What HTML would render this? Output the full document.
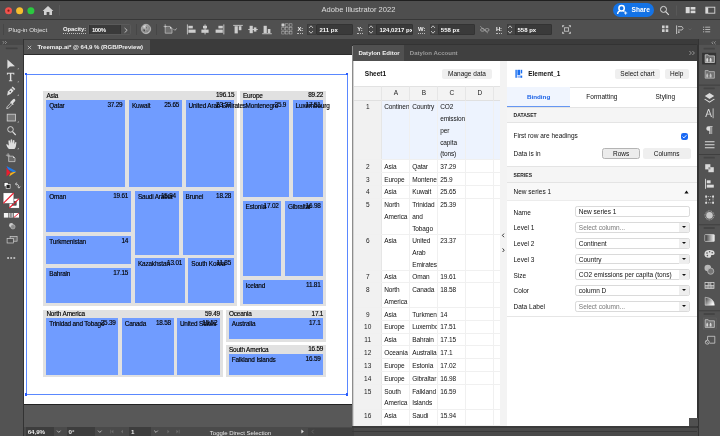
<!DOCTYPE html><html lang="en"><head><meta charset="utf-8"><title>Adobe Illustrator 2022</title><style>
*{box-sizing:border-box;margin:0;padding:0}
html,body{width:720px;height:436px;overflow:hidden;background:#505050}
body{position:relative;will-change:transform;font-family:"Liberation Sans",sans-serif;font-size:6.5px;color:#111;line-height:1}
.abs,.abs>*{position:absolute}
div,span,svg{position:absolute;white-space:nowrap}
/* ---------- chrome ---------- */
#titlebar{left:0;top:0;width:720px;height:19.6px;background:#4e4e4e}
#topline{left:0;top:0;width:720px;height:1.3px;background:#1f1f1f}
#ctrl{left:0;top:19.4px;width:720px;height:19.6px;background:#505050;border-top:0.8px solid #383838}
#tabstrip{left:23px;top:38.8px;width:697px;height:16.2px;background:#3b3b3b;border-bottom:1px solid #2c2c2c}
#doctab{left:24px;top:39.8px;width:125.6px;height:14.6px;background:#535353}
#toolbar{left:0;top:39px;width:24px;height:397px;background:#535353;border-right:1.3px solid #333}
#tbhead{left:0;top:38.8px;width:22.7px;height:6.6px;background:#484848}
#canvas{left:24px;top:54.8px;width:330px;height:350.3px;background:#fff;border-bottom:0.6px solid #222}
#below{left:24px;top:405px;width:330px;height:22px;background:#585858}
#status{left:24px;top:426.6px;width:674px;height:10px;background:#4a4a4a}
.t{color:#e2e2e2;font-size:6.2px}
.fld{background:#3a3a3a;border:0.5px solid #333;border-radius:1px;height:10.5px;top:24.3px;color:#fafafa;font-size:6px;font-weight:bold;line-height:10.2px;padding-left:2px;overflow:hidden}
.vsep{width:0.8px;background:#464646;top:24px;height:11px}
.ul{border-bottom:0.5px dotted #bbb;color:#f2f2f2;font-weight:bold;font-size:5.9px;letter-spacing:-0.05px;margin-top:0.6px}
/* ---------- treemap ---------- */
.g{background:#e1e1e1}
.c{background:#709cff}
.tm{font-size:6.4px;color:#000;letter-spacing:-0.15px;-webkit-text-stroke:0.15px #000}
.tm i{font-style:normal;position:absolute;top:3px}
.tm i.l{left:3px}
.tm i.r{right:2.8px;letter-spacing:-0.2px;margin-top:-0.9px}
.gl>i{top:1.9px!important}
/* ---------- datylon panel ---------- */
#pshadow{left:352.1px;top:43.8px;width:346.4px;height:384.5px;background:#333;border-radius:2px 2px 0 0}
#phead{left:353.4px;top:45.4px;width:344.1px;height:15.2px;background:#404040}
#ptab{left:353.4px;top:45.4px;width:51px;height:15.2px;background:#505050}
#pbody{left:352.6px;top:60.8px;width:344.9px;height:365.4px;background:#fff;border-left:1px solid #d2d2d2}
#split{left:500px;top:60.8px;width:7px;height:365.4px;background:#f3f3f3}
.btn{background:#efefef;border-radius:2px;height:10.5px;line-height:10.5px;text-align:center;font-size:6.5px;color:#111;top:68.5px}
.hdrcell{top:86.2px;height:14.4px;line-height:14.6px;text-align:center;font-size:6.5px;color:#222;border-right:0.5px solid #e6e6e6}
.row{left:354.2px;width:145.8px;border-bottom:0.5px solid #f0f0f0;overflow:hidden}
.row b{position:absolute;left:0;top:0;bottom:0;width:28.1px;background:#f1f1f1;border-right:0.5px solid #e6e6e6;font-weight:normal;text-align:center;line-height:11.8px;padding-top:0.6px;color:#222}
.row p{position:absolute;top:0;bottom:0;width:28px;border-right:0.5px solid #f0f0f0;white-space:normal;overflow:hidden;line-height:11.8px;padding:0.6px 0 0 1.9px;color:#111;word-spacing:0;letter-spacing:-0.1px}
.row p span{position:static;white-space:nowrap;display:block}
.sec{left:507px;width:190px;background:#f5f5f5;border-top:0.5px solid #e4e4e4;border-bottom:0.5px solid #e4e4e4;font-size:5px;font-weight:bold;color:#222;padding-left:6.5px;letter-spacing:0.05px}
.lab{left:513.5px;font-size:6.5px;color:#111}
.inp{left:575.3px;width:115.2px;height:10.8px;border:0.8px solid #dadada;border-radius:2.2px;background:#fff;font-size:6.5px;line-height:9.6px;padding-left:2.5px;color:#111}
.inp.ph{color:#777}
.inp u{position:absolute;right:0;top:0;width:10.6px;height:9.2px;background:#eee;border-radius:0 1.6px 1.6px 0;text-decoration:none}
.inp u:after{content:"";position:absolute;left:3.3px;top:3.3px;border:2px solid transparent;border-top:2.4px solid #111;border-bottom:0}
/* ---------- right dock ---------- */
#dock{left:697.5px;top:39px;width:22.5px;height:397px;background:#535353;border-left:1px solid #333}
#dockhead{left:698.5px;top:38.8px;width:21.5px;height:5.8px;background:#484848}
.dsep{left:703px;width:13px;height:1px;background:#3a3a3a}
</style></head><body>
<div id="titlebar"></div><div id="topline"></div>
<svg style="left:0;top:0" width="70" height="20" viewBox="0 0 70 20"><circle cx="8.5" cy="10.7" r="3.5" fill="#f0524d"/><circle cx="8.5" cy="10.7" r="1.1" fill="#8c1a14"/><circle cx="19.6" cy="10.7" r="3.5" fill="#f6bd2f"/><circle cx="30.9" cy="10.7" r="3.5" fill="#2bc840"/><path d="M42.6 11 L48 6 L53.4 11 L52 11 L52 15 L49.4 15 L49.4 12 L46.6 12 L46.6 15 L44 15 L44 11 Z" fill="#d2d2d2"/><rect x="59" y="5" width="0.8" height="10.5" fill="#5c5c5c"/></svg>
<div class="t" style="left:321.5px;top:6.3px;font-size:7.55px;color:#dedede">Adobe Illustrator 2022</div>
<div style="left:612.7px;top:3px;width:41.5px;height:13.5px;border-radius:7px;background:#1473e6"></div>
<svg style="left:616px;top:4px" width="14" height="12" viewBox="0 0 14 12"><circle cx="5.6" cy="4.2" r="2.7" fill="none" stroke="#fff" stroke-width="1.5"/><path d="M1.6 10 Q2 7.2 4.2 6.8 M7.2 6.8 Q8 7 8.4 7.6" fill="none" stroke="#fff" stroke-width="1.4"/><path d="M9.6 7.4v3.2M8 9h3.2" stroke="#fff" stroke-width="0.9"/></svg>
<div style="left:631.5px;top:7.3px;font-size:6.6px;font-weight:bold;color:#fff">Share</div>
<svg style="left:658px;top:4px" width="62" height="13" viewBox="0 0 62 13"><circle cx="5.5" cy="5.4" r="3" fill="none" stroke="#dcdcdc" stroke-width="1"/><path d="M7.7 7.7 L10.8 10.8" stroke="#dcdcdc" stroke-width="1.2"/><rect x="18.2" y="1.5" width="0.8" height="10" fill="#5c5c5c"/><rect x="27.7" y="3" width="4" height="6.2" fill="#d8d8d8"/><rect x="32.6" y="3" width="4.8" height="2.6" fill="#d8d8d8"/><rect x="32.6" y="6.6" width="4.8" height="2.6" fill="#d8d8d8"/><rect x="47.8" y="3.2" width="9" height="6" fill="none" stroke="#d8d8d8" stroke-width="0.9"/><rect x="48" y="3.4" width="2.2" height="5.6" fill="#d8d8d8"/></svg>
<div id="ctrl"></div>
<div class="vsep" style="left:3px"></div>
<div class="t" style="left:8.3px;top:26.8px">Plug-in Object</div>
<div class="t ul" style="left:62.9px;top:26.8px;height:7px">Opacity:</div>
<div class="fld" style="left:88.9px;width:32.2px;letter-spacing:-0.4px">100%</div>
<div style="left:88.4px;top:23.8px;width:42.6px;height:11.5px;border:0.5px solid #5a5a5a;border-radius:1.5px"></div>
<svg style="left:123px;top:26.5px" width="6" height="7" viewBox="0 0 6 7"><path d="M1.6 1 L4.2 3.3 L1.6 5.6" fill="none" stroke="#d0d0d0" stroke-width="0.8"/></svg>
<div class="vsep" style="left:136.3px"></div>
<svg style="left:140.4px;top:23.2px" width="12" height="12" viewBox="0 0 12 12"><defs><radialGradient id="gl" cx="0.4" cy="0.35" r="0.7"><stop offset="0" stop-color="#b4b4b4"/><stop offset="0.7" stop-color="#8a8a8a"/><stop offset="1" stop-color="#c6c6c6"/></radialGradient></defs><circle cx="6" cy="6" r="4.7" fill="url(#gl)" stroke="#cdcdcd" stroke-width="0.6"/><path d="M3.2 6.6 Q4.2 5.6 5 6.8 Q5.4 8.2 4.4 8.6 Q3.2 8 3.2 6.6Z M6.2 3.6 Q7.2 4.6 6.4 6 Q5.8 5 6.2 3.6Z M6.6 7.2 Q7.6 7.4 7.4 8.8 Q6.6 8.6 6.6 7.2Z" fill="#4a4a4a"/><path d="M3 3.6 Q4.6 2 6.4 2.2 Q5 3.4 4.4 5 Q3.4 4.8 3 3.6Z" fill="#d6d6d6"/></svg>
<div class="vsep" style="left:156.2px;background:#464646"></div>
<svg style="left:162px;top:23px" width="18" height="13" viewBox="0 0 18 13"><path d="M3.2 3.4 H8 L10 5.4 V10.2 H3.2 Z" fill="#6e6e6e" stroke="#c6c6c6" stroke-width="0.7"/><path d="M8 3.4 L10 5.4 H8Z" fill="#e6e6e6"/><path d="M3.2 1.2 V4.6 M1.6 3.4 H4.6" stroke="#d8d8d8" stroke-width="0.6"/><path d="M11.4 5.9 L12.8 7.3 L14.8 5.5" fill="none" stroke="#cfcfcf" stroke-width="0.7"/></svg>
<svg style="left:185.6px;top:24px" width="10" height="11" viewBox="0 0 10 11"><rect x="0.9" y="0.4" width="0.9" height="10" fill="#cdcdcd"/><rect x="2.4" y="1.8" width="4.4" height="2.6" fill="#cdcdcd"/><rect x="2.4" y="5.6" width="7.2" height="3.2" fill="#cdcdcd"/></svg>
<svg style="left:200.3px;top:24px" width="10" height="11" viewBox="0 0 10 11"><rect x="4.6" y="0.4" width="0.9" height="10" fill="#cdcdcd"/><rect x="3" y="1.8" width="4" height="2.6" fill="#cdcdcd"/><rect x="1.4" y="5.6" width="7.2" height="3.2" fill="#cdcdcd"/></svg>
<svg style="left:215.4px;top:24px" width="10" height="11" viewBox="0 0 10 11"><rect x="8.4" y="0.4" width="0.9" height="10" fill="#cdcdcd"/><rect x="3.4" y="1.8" width="4.4" height="2.6" fill="#cdcdcd"/><rect x="0.6" y="5.6" width="7.2" height="3.2" fill="#cdcdcd"/></svg>
<svg style="left:232.6px;top:24px" width="10" height="11" viewBox="0 0 10 11"><rect x="0.2" y="0.9" width="9.6" height="0.9" fill="#cdcdcd"/><rect x="1.6" y="2.2" width="3.2" height="7.2" fill="#cdcdcd"/><rect x="5.8" y="2.2" width="2.6" height="4" fill="#cdcdcd"/></svg>
<svg style="left:247.7px;top:24px" width="10" height="11" viewBox="0 0 10 11"><rect x="0.2" y="5" width="9.6" height="0.9" fill="#cdcdcd"/><rect x="1.6" y="1.8" width="3.2" height="7.4" fill="#cdcdcd"/><rect x="5.8" y="3.4" width="2.6" height="4.2" fill="#cdcdcd"/></svg>
<svg style="left:262.1px;top:24px" width="10" height="11" viewBox="0 0 10 11"><rect x="0.2" y="9.3" width="9.6" height="0.9" fill="#cdcdcd"/><rect x="1.6" y="1.8" width="3.2" height="7.2" fill="#cdcdcd"/><rect x="5.8" y="5" width="2.6" height="4" fill="#cdcdcd"/></svg>
<svg style="left:280.5px;top:23px" width="12" height="12" viewBox="0 0 12 12"><rect x="0.8" y="0.8" width="2.4" height="2.4" fill="#d0d0d0" stroke="#bdbdbd" stroke-width="0.5"/><rect x="4.7" y="0.8" width="2.4" height="2.4" fill="none" stroke="#bdbdbd" stroke-width="0.5"/><rect x="8.6" y="0.8" width="2.4" height="2.4" fill="none" stroke="#bdbdbd" stroke-width="0.5"/><rect x="0.8" y="4.7" width="2.4" height="2.4" fill="none" stroke="#bdbdbd" stroke-width="0.5"/><rect x="4.7" y="4.7" width="2.4" height="2.4" fill="none" stroke="#bdbdbd" stroke-width="0.5"/><rect x="8.6" y="4.7" width="2.4" height="2.4" fill="none" stroke="#bdbdbd" stroke-width="0.5"/><rect x="0.8" y="8.6" width="2.4" height="2.4" fill="none" stroke="#bdbdbd" stroke-width="0.5"/><rect x="4.7" y="8.6" width="2.4" height="2.4" fill="none" stroke="#bdbdbd" stroke-width="0.5"/><rect x="8.6" y="8.6" width="2.4" height="2.4" fill="none" stroke="#bdbdbd" stroke-width="0.5"/></svg>
<div class="t ul" style="left:297.4px;top:26.8px;height:7px">X:</div><div style="left:307.4px;top:24.3px;width:9px;height:10.5px;background:#454545;border:0.5px solid #3c3c3c;border-right:0;border-radius:1px 0 0 1px"></div><svg style="left:307.6px;top:24px" width="6" height="11" viewBox="0 0 6 11"><path d="M1 4 L3 1.8 L5 4M1 7 L3 9.2 L5 7" fill="none" stroke="#d8d8d8" stroke-width="0.8"/></svg>
<div class="fld" style="left:316.4px;width:36.8px">211 px</div>
<div class="t ul" style="left:357.3px;top:26.8px;height:7px">Y:</div><div style="left:368.2px;top:24.3px;width:9px;height:10.5px;background:#454545;border:0.5px solid #3c3c3c;border-right:0;border-radius:1px 0 0 1px"></div><svg style="left:368.4px;top:24px" width="6" height="11" viewBox="0 0 6 11"><path d="M1 4 L3 1.8 L5 4M1 7 L3 9.2 L5 7" fill="none" stroke="#d8d8d8" stroke-width="0.8"/></svg>
<div class="fld" style="left:376.4px;width:36.8px">124,0217 px</div>
<div class="t ul" style="left:418px;top:26.8px;height:7px">W:</div><div style="left:429.5px;top:24.3px;width:9px;height:10.5px;background:#454545;border:0.5px solid #3c3c3c;border-right:0;border-radius:1px 0 0 1px"></div><svg style="left:429.7px;top:24px" width="6" height="11" viewBox="0 0 6 11"><path d="M1 4 L3 1.8 L5 4M1 7 L3 9.2 L5 7" fill="none" stroke="#d8d8d8" stroke-width="0.8"/></svg>
<div class="fld" style="left:437.8px;width:37.2px">558 px</div>
<svg style="left:479px;top:24.5px" width="11" height="10" viewBox="0 0 11 10"><path d="M1.2 1.2 L9 8.2" stroke="#a8a8a8" stroke-width="0.7"/><rect x="1.6" y="3.6" width="3.8" height="2.6" rx="1.3" fill="none" stroke="#a8a8a8" stroke-width="0.8"/><rect x="6.2" y="3.6" width="3.8" height="2.6" rx="1.3" fill="none" stroke="#a8a8a8" stroke-width="0.8"/></svg>
<div class="t ul" style="left:495.9px;top:26.8px;height:7px">H:</div><div style="left:506.5px;top:24.3px;width:9px;height:10.5px;background:#454545;border:0.5px solid #3c3c3c;border-right:0;border-radius:1px 0 0 1px"></div><svg style="left:506.7px;top:24px" width="6" height="11" viewBox="0 0 6 11"><path d="M1 4 L3 1.8 L5 4M1 7 L3 9.2 L5 7" fill="none" stroke="#d8d8d8" stroke-width="0.8"/></svg>
<div class="fld" style="left:514.5px;width:37.6px">558 px</div>
<svg style="left:562px;top:24.6px" width="9" height="9" viewBox="0 0 9 9"><rect x="2.6" y="2.8" width="3.8" height="3.4" fill="none" stroke="#cfcfcf" stroke-width="0.8"/><path d="M0.5 2.2 V0.6 H2.2 M6.8 0.6 H8.5 V2.2 M8.5 6.8 V8.4 H6.8 M2.2 8.4 H0.5 V6.8" fill="none" stroke="#cfcfcf" stroke-width="0.8"/><path d="M0.5 0.6 L2.4 2.6 M8.5 0.6 L6.6 2.6 M0.5 8.4 L2.4 6.4 M8.5 8.4 L6.6 6.4" stroke="#cfcfcf" stroke-width="0.5"/></svg>
<svg style="left:660px;top:24px" width="56" height="11" viewBox="0 0 56 11"><path d="M2 1.6h2.6v2.6h-2.6zM5.7 1.6h2.6v2.6h-2.6zM2 5.3h2.6v2.6h-2.6zM5.7 5.3h2.6v2.6h-2.6z" fill="#cfcfcf"/><rect x="16.2" y="1.4" width="0.9" height="8.6" fill="#cfcfcf"/><path d="M18 2.6 H22 Q24.2 4.3 22 6 H18" fill="none" stroke="#cfcfcf" stroke-width="0.8"/><rect x="18" y="7.4" width="1.6" height="1.4" fill="#cfcfcf"/><path d="M28.6 4.6 L30 6 L31.4 4.6" fill="none" stroke="#6c6c6c" stroke-width="0.7"/><path d="M43 3.2h1.2M45.2 3.2h5M43 5.5h1.2M45.2 5.5h5M43 7.8h1.2M45.2 7.8h5" stroke="#bdbdbd" stroke-width="0.9"/></svg>
<div id="tabstrip"></div><div id="doctab"></div>
<svg style="left:27.4px;top:44.6px" width="5" height="5" viewBox="0 0 5 5"><path d="M0.8 0.8 L4.2 4.2 M4.2 0.8 L0.8 4.2" stroke="#d8d8d8" stroke-width="0.7"/></svg>
<div style="left:37.4px;top:44px;font-size:6.05px;font-weight:bold;color:#f0f0f0">Treemap.ai* @ 64,9 % (RGB/Preview)</div>
<div id="toolbar"></div><div id="tbhead"></div>
<svg style="left:0;top:39px" width="23" height="230" viewBox="-0.7 39 23 230"><path d="M2 41.1 L3.4 42.5 L2 43.9 M4.4 41.1 L5.8 42.5 L4.4 43.9" fill="none" stroke="#bdbdbd" stroke-width="0.6"/><rect x="5" y="47.6" width="12" height="1.6" rx="0.8" fill="#424242"/><path d="M6.7 59.4 L6.7 68.8 L9.2 66.5 L14.3 66.2 Z" fill="#dedede"/><path d="M6.2 72.8 H13.6 V74.8 H12.9 L12.5 73.7 H10.6 V80.2 L11.6 80.5 V81.2 H8.2 V80.5 L9.2 80.2 V73.7 H7.3 L6.9 74.8 H6.2 Z" fill="#dedede"/><path d="M6.4 95.6 L7.2 91.4 L10.4 88.2 L13 90.8 L9.8 94 Z" fill="#dedede"/><path d="M10.9 87.6 L12 86.4 L14.6 89 L13.5 90.2 Z" fill="#dedede"/><circle cx="9.6" cy="91.6" r="0.8" fill="#4f4f4f"/><path d="M6 108.6 L6.4 106.8 L10.6 102.4 L12 103.8 L7.8 108.2 Z" fill="none" stroke="#dedede" stroke-width="0.8"/><path d="M10.2 101.4 L12.4 99.2 Q13.6 98.4 14.4 99.4 Q15 100.4 14.2 101.2 L12.2 103.4 L13 104.2 L12.2 105 L9.4 102.2 L10.2 101.4Z" fill="#dedede"/><rect x="6.5" y="114.2" width="8.2" height="6.8" fill="#777" stroke="#d4d4d4" stroke-width="0.8"/><circle cx="9.8" cy="129.4" r="2.8" fill="none" stroke="#dedede" stroke-width="0.9"/><path d="M11.8 131.6 L15 135" stroke="#dedede" stroke-width="1.2"/><g transform="translate(10.6 144.6) scale(1.12) translate(-10.8 -145)"><path d="M8.6 149 Q6.6 146.6 6.2 145 Q7 144.2 8 145.4 L8.6 146 L8.2 141.6 Q9 140.8 9.6 141.6 L10 144 L10.2 140.6 Q11 139.8 11.6 140.6 L11.8 144 L12.4 141.2 Q13.2 140.6 13.6 141.4 L13.6 144.6 L14.4 142.8 Q15.2 142.4 15.4 143.2 L14.8 147 Q14.4 148.4 13.6 149 Z" fill="#dedede"/></g><path d="M7.4 153.2 V157 M5.2 155.2 H9.4" stroke="#dedede" stroke-width="0.6" fill="none"/><path d="M8 156.2 H12.4 L14.3 158.1 V161.6 H8 Z" fill="#6a6a6a" stroke="#d4d4d4" stroke-width="0.7"/><path d="M12.4 156.2 L14.3 158.1 H12.4Z" fill="#e0e0e0"/><path d="M5.8 167.6 L5.8 176.6 L9.8 172.8 Z" fill="#ee1c2e"/><path d="M5.8 166 L15.6 171.3 L13 172.4 L7.2 169.2 Z" fill="#1f7ae8"/><path d="M15.6 171.7 L8.4 176.4 L9.8 173 L12.8 172 Z" fill="#f5b320"/><rect x="3.4" y="182.6" width="4" height="4" fill="#fff" stroke="#222" stroke-width="0.5"/><rect x="5.4" y="184.6" width="4" height="4" fill="#222" stroke="#fff" stroke-width="0.6"/><path d="M14.8 184 Q18.2 183.6 18.2 187.8 M16.8 186.6 L18.2 188.2 L19.6 186.6 M16.4 182.6 L14.6 184 L16.4 185.4" fill="none" stroke="#d4d4d4" stroke-width="0.8"/><rect x="8.4" y="198.4" width="10.2" height="9.8" fill="#fff" stroke="#333" stroke-width="0.5"/><rect x="11.4" y="201.2" width="4.2" height="4.2" fill="#535353" stroke="#333" stroke-width="0.4"/><path d="M8.6 208 L18.4 198.6" stroke="#ee1c2e" stroke-width="1.1"/><rect x="2.4" y="192.8" width="10.8" height="10.8" fill="#fff" stroke="#333" stroke-width="0.5"/><path d="M2.6 203.4 L13 193" stroke="#ee1c2e" stroke-width="1.1"/><rect x="3.2" y="213" width="4.2" height="4.6" fill="#f4f4f4"/><rect x="7.9" y="213" width="4.5" height="4.6" fill="#c4c4c4"/><rect x="9.2" y="213" width="1.8" height="4.6" fill="#909090"/><rect x="13.1" y="213" width="5.2" height="4.6" fill="#fff"/><path d="M13.3 217.4 L18.1 213.2" stroke="#ee1c2e" stroke-width="1"/><circle cx="10.6" cy="225.2" r="2.2" fill="#cfcfcf"/><circle cx="12.2" cy="226.8" r="2.2" fill="#8d8d8d" stroke="#cfcfcf" stroke-width="0.5"/><rect x="9.4" y="236.4" width="7" height="4.8" fill="#6a6a6a" stroke="#cfcfcf" stroke-width="0.7"/><rect x="6.4" y="238.4" width="6.4" height="4.6" fill="#4f4f4f" stroke="#cfcfcf" stroke-width="0.7"/><rect x="6.5" y="257.2" width="1.8" height="1.6" fill="#cfcfcf"/><rect x="9.6" y="257.2" width="1.8" height="1.6" fill="#cfcfcf"/><rect x="12.7" y="257.2" width="1.8" height="1.6" fill="#cfcfcf"/>
<path d="M16.6 69.3 h1.4 v-1.4z" fill="#cfcfcf"/><path d="M16.6 82.3 h1.4 v-1.4z" fill="#cfcfcf"/><path d="M16.6 95.7 h1.4 v-1.4z" fill="#cfcfcf"/><path d="M16.6 122.4 h1.4 v-1.4z" fill="#cfcfcf"/><path d="M16.6 149.2 h1.4 v-1.4z" fill="#cfcfcf"/></svg>
<div id="canvas"></div><div id="below"></div>
<div style="left:26px;top:73.8px;width:321.5px;height:320.8px;border:0.6px solid #5a88ff"></div>
<div style="left:25.1px;top:72.9px;width:2.4px;height:2.4px;background:#2a5cff"></div>
<div style="left:346.0px;top:72.9px;width:2.4px;height:2.4px;background:#2a5cff"></div>
<div style="left:25.1px;top:393.2px;width:2.4px;height:2.4px;background:#2a5cff"></div>
<div style="left:346.0px;top:393.2px;width:2.4px;height:2.4px;background:#2a5cff"></div>
<div class="g" style="left:43.4px;top:91.1px;width:193.7px;height:214.7px"></div>
<div class="g" style="left:240.0px;top:91.1px;width:86.0px;height:214.7px"></div>
<div class="g" style="left:43.4px;top:309.5px;width:179.3px;height:67.7px"></div>
<div class="g" style="left:225.9px;top:309.5px;width:100.1px;height:32.0px"></div>
<div class="g" style="left:225.9px;top:344.8px;width:100.1px;height:32.4px"></div>
<div class="c" style="left:46.3px;top:99.8px;width:78.9px;height:87.6px"></div>
<div class="c" style="left:129.0px;top:99.8px;width:53.0px;height:87.6px"></div>
<div class="c" style="left:185.5px;top:99.8px;width:48.4px;height:87.6px"></div>
<div class="c" style="left:46.3px;top:190.9px;width:84.7px;height:41.1px"></div>
<div class="c" style="left:46.3px;top:235.5px;width:84.7px;height:28.5px"></div>
<div class="c" style="left:46.3px;top:267.6px;width:84.7px;height:35.6px"></div>
<div class="c" style="left:134.9px;top:190.9px;width:43.9px;height:63.9px"></div>
<div class="c" style="left:182.6px;top:190.9px;width:51.3px;height:63.9px"></div>
<div class="c" style="left:134.9px;top:258.0px;width:50.0px;height:45.2px"></div>
<div class="c" style="left:188.3px;top:258.0px;width:45.6px;height:45.2px"></div>
<div class="c" style="left:242.6px;top:99.8px;width:46.4px;height:97.2px"></div>
<div class="c" style="left:292.6px;top:99.8px;width:30.8px;height:97.2px"></div>
<div class="c" style="left:242.6px;top:200.5px;width:38.8px;height:75.5px"></div>
<div class="c" style="left:284.9px;top:200.5px;width:38.5px;height:75.5px"></div>
<div class="c" style="left:242.6px;top:279.5px;width:80.8px;height:24.0px"></div>
<div class="c" style="left:46.3px;top:317.8px;width:72.2px;height:56.8px"></div>
<div class="c" style="left:121.7px;top:317.8px;width:52.0px;height:56.8px"></div>
<div class="c" style="left:176.9px;top:317.8px;width:43.2px;height:56.8px"></div>
<div class="c" style="left:228.8px;top:317.8px;width:94.6px;height:21.2px"></div>
<div class="c" style="left:228.8px;top:353.7px;width:94.6px;height:20.9px"></div>
<div class="tm gl" style="left:43.4px;top:91.1px;width:193.7px;height:8px"><i class="l">Asia</i><i class="r">196.15</i></div>
<div class="tm gl" style="left:240.0px;top:91.1px;width:86.0px;height:8px"><i class="l">Europe</i><i class="r">89.22</i></div>
<div class="tm gl" style="left:43.4px;top:309.5px;width:179.3px;height:8px"><i class="l">North America</i><i class="r">59.49</i></div>
<div class="tm gl" style="left:225.9px;top:309.5px;width:100.1px;height:8px"><i class="l">Oceania</i><i class="r">17.1</i></div>
<div class="tm gl" style="left:225.9px;top:344.8px;width:100.1px;height:8px"><i class="l">South America</i><i class="r">16.59</i></div>
<div class="tm" style="left:46.3px;top:99.8px;width:78.9px;height:8px"><i class="l">Qatar</i><i class="r">37.29</i></div>
<div class="tm" style="left:129.0px;top:99.8px;width:53.0px;height:8px"><i class="l">Kuwait</i><i class="r">25.65</i></div>
<div class="tm" style="left:185.5px;top:99.8px;width:48.4px;height:8px"><i class="l">United Arab Emirates</i><i class="r">23.37</i></div>
<div class="tm" style="left:46.3px;top:190.9px;width:84.7px;height:8px"><i class="l">Oman</i><i class="r">19.61</i></div>
<div class="tm" style="left:46.3px;top:235.5px;width:84.7px;height:8px"><i class="l">Turkmenistan</i><i class="r">14</i></div>
<div class="tm" style="left:46.3px;top:267.6px;width:84.7px;height:8px"><i class="l">Bahrain</i><i class="r">17.15</i></div>
<div class="tm" style="left:134.9px;top:190.9px;width:43.9px;height:8px"><i class="l">Saudi Arabia</i><i class="r">15.94</i></div>
<div class="tm" style="left:182.6px;top:190.9px;width:51.3px;height:8px"><i class="l">Brunei</i><i class="r">18.28</i></div>
<div class="tm" style="left:134.9px;top:258.0px;width:50.0px;height:8px"><i class="l">Kazakhstan</i><i class="r">13.01</i></div>
<div class="tm" style="left:188.3px;top:258.0px;width:45.6px;height:8px"><i class="l">South Korea</i><i class="r">11.85</i></div>
<div class="tm" style="left:242.6px;top:99.8px;width:46.4px;height:8px"><i class="l">Montenegro</i><i class="r">25.9</i></div>
<div class="tm" style="left:292.6px;top:99.8px;width:30.8px;height:8px"><i class="l">Luxembourg</i><i class="r">17.51</i></div>
<div class="tm" style="left:242.6px;top:200.5px;width:38.8px;height:8px"><i class="l">Estonia</i><i class="r">17.02</i></div>
<div class="tm" style="left:284.9px;top:200.5px;width:38.5px;height:8px"><i class="l">Gibraltar</i><i class="r">16.98</i></div>
<div class="tm" style="left:242.6px;top:279.5px;width:80.8px;height:8px"><i class="l">Iceland</i><i class="r">11.81</i></div>
<div class="tm" style="left:46.3px;top:317.8px;width:72.2px;height:8px"><i class="l">Trinidad and Tobago</i><i class="r">25.39</i></div>
<div class="tm" style="left:121.7px;top:317.8px;width:52.0px;height:8px"><i class="l">Canada</i><i class="r">18.58</i></div>
<div class="tm" style="left:176.9px;top:317.8px;width:43.2px;height:8px"><i class="l">United States</i><i class="r">15.52</i></div>
<div class="tm" style="left:228.8px;top:317.8px;width:94.6px;height:8px"><i class="l">Australia</i><i class="r">17.1</i></div>
<div class="tm" style="left:228.8px;top:353.7px;width:94.6px;height:8px"><i class="l">Falkland Islands</i><i class="r">16.59</i></div>
<div id="status"></div>
<div style="left:25.6px;top:427.4px;width:28.2px;height:8.6px;background:#3d3d3d"></div><div style="left:27.7px;top:429.4px;font-size:6.2px;color:#ececec;font-weight:bold;letter-spacing:-0.05px">64,9%</div>
<div style="left:66.9px;top:427.4px;width:28.2px;height:8.6px;background:#3d3d3d"></div><div style="left:68.6px;top:429.4px;font-size:6.2px;color:#ececec;font-weight:bold">0°</div>
<div style="left:128.6px;top:427.4px;width:22.6px;height:8.6px;background:#3d3d3d"></div><div style="left:131px;top:429.4px;font-size:6.2px;color:#ececec;font-weight:bold">1</div>
<svg style="left:24px;top:427px" width="330" height="9" viewBox="24 427 330 9"><path d="M57 430.6 L58.8 432.4 L60.6 430.6 M98 430.6 L99.8 432.4 L101.6 430.6 M154.2 430.6 L156 432.4 L157.8 430.6" fill="none" stroke="#d0d0d0" stroke-width="0.8"/><path d="M113.4 429.8 L111.4 431.6 L113.4 433.4Z M123 429.8 L121 431.6 L123 433.4Z" fill="#6d6d6d"/><rect x="110.4" y="429.8" width="0.7" height="3.6" fill="#6d6d6d"/><path d="M167.4 429.8 L169.4 431.6 L167.4 433.4Z M176.4 429.8 L178.4 431.6 L176.4 433.4Z" fill="#6d6d6d"/><rect x="178.8" y="429.8" width="0.7" height="3.6" fill="#6d6d6d"/><path d="M301.4 429.6 L303.8 431.6 L301.4 433.6Z" fill="#e0e0e0"/><path d="M313.6 429.8 L312 431.6 L313.6 433.4" fill="none" stroke="#6d6d6d" stroke-width="0.7"/></svg>
<div style="left:209.8px;top:429.5px;font-size:6px;color:#e6e6e6">Toggle Direct Selection</div>
<div style="left:308px;top:427.5px;width:46px;height:8.5px;background:#414141"></div>
<svg style="left:308px;top:427px" width="10" height="9" viewBox="308 427 10 9"><path d="M313.6 429.8 L312 431.6 L313.6 433.4" fill="none" stroke="#6d6d6d" stroke-width="0.7"/></svg>
<div id="dock"></div><div id="dockhead"></div>
<svg style="left:699px;top:39px" width="21" height="320" viewBox="699 39 21 320"><defs><linearGradient id="gr" x1="0" x2="1"><stop offset="0" stop-color="#2e2e2e"/><stop offset="1" stop-color="#fafafa"/></linearGradient><linearGradient id="gr2" x1="0" x2="1" y1="0" y2="0.6"><stop offset="0" stop-color="#3a3a3a"/><stop offset="1" stop-color="#fff"/></linearGradient></defs><path d="M713.2 41.4 L711.8 42.8 L713.2 44.2 M715.6 41.4 L714.2 42.8 L715.6 44.2" fill="none" stroke="#bdbdbd" stroke-width="0.6"/><rect x="703.5" y="47.7" width="11.4" height="1.9" rx="0.9" fill="#444"/><rect x="702.1" y="52.8" width="14" height="11.6" fill="#343434"/><path d="M705.2 54.8 H708.2 L709 55.9 H714.4 V62.5 H705.2 Z" fill="#727272" stroke="#dcdcdc" stroke-width="0.7"/><path d="M706.3 61.7 V59.5 L706.8 57.9 H707.6 L708.1 59.5 V61.7 Z" fill="#dcdcdc"/><path d="M709.7 61.7 V59.5 L710.2 57.9 H711.0 L711.5 59.5 V61.7 Z" fill="#dcdcdc"/><path d="M705.2 70.5 H708.2 L709 71.6 H714.4 V78.2 H705.2 Z" fill="#727272" stroke="#c2c2c2" stroke-width="0.7"/><path d="M706.3 77.4 V75.2 L706.8 73.6 H707.6 L708.1 75.2 V77.4 Z" fill="#c2c2c2"/><path d="M709.7 77.4 V75.2 L710.2 73.6 H711.0 L711.5 75.2 V77.4 Z" fill="#c2c2c2"/><rect x="699" y="84.7" width="21" height="0.8" fill="#3a3a3a"/><rect x="703.5" y="87.4" width="11.4" height="1.8" rx="0.9" fill="#444"/><path d="M709.5 93 L714.2 96 L709.5 99 L704.8 96 Z" fill="#dcdcdc"/><path d="M705 98.7 L709.5 101.5 L714 98.7 L714.8 99.3 L709.5 102.7 L704.2 99.3Z" fill="#dcdcdc"/><path d="M705.2 117 L708.1 108.9 H709.1 L712 117 H710.9 L710.1 114.6 H707.1 L706.3 117 Z M707.4 113.7 H709.8 L708.6 110.2Z" fill="#dcdcdc"/><rect x="712.7" y="108.4" width="0.8" height="9.8" fill="#dcdcdc"/><path d="M708.6 126.2 H712.6 V127 H712.1 V134 H710.6 V127 H710.1 V134 H709.3 V130.8 Q706.3 130.8 706.3 128.5 Q706.3 126.2 708.6 126.2Z" fill="#dcdcdc"/><rect x="710.6" y="127" width="1.5" height="7" fill="#9c9c9c"/><path d="M704.9 141.7 H714.5 M704.9 144.7 H714.5 M704.9 147.7 H714.5" stroke="#dcdcdc" stroke-width="1.1"/><rect x="699" y="154.1" width="21" height="0.8" fill="#3a3a3a"/><rect x="703.5" y="156.8" width="11.4" height="1.8" rx="0.9" fill="#444"/><rect x="705.2" y="164.2" width="5.2" height="5.2" fill="#d8d8d8"/><rect x="708.4" y="167.2" width="5.4" height="5" fill="#d8d8d8"/><rect x="708.4" y="167.2" width="2" height="2.2" fill="#8a8a8a"/><rect x="705.1" y="178.8" width="0.9" height="10" fill="#dcdcdc"/><rect x="706.8" y="180.3" width="3.8" height="3" fill="#dcdcdc"/><rect x="706.8" y="184.7" width="7" height="2.9" fill="#dcdcdc"/><rect x="706.2" y="196.6" width="6.8" height="6.2" fill="none" stroke="#dcdcdc" stroke-width="0.7" stroke-dasharray="1.1 0.8"/><path d="M705.2 195.6h1.8v1.8h-1.8zM712.2 195.6h1.8v1.8h-1.8zM705.2 202h1.8v1.8h-1.8zM712.2 202h1.8v1.8h-1.8z" fill="#dcdcdc"/><rect x="709" y="199.1" width="1.2" height="1.2" fill="#dcdcdc"/><circle cx="709.5" cy="215.4" r="3.3" fill="#c8c8c8"/><circle cx="709.5" cy="215.4" r="4.5" fill="none" stroke="#c4c4c4" stroke-width="0.9" stroke-dasharray="0.8 0.8"/><rect x="699" y="224.4" width="21" height="0.8" fill="#3a3a3a"/><rect x="703.5" y="227.1" width="11.4" height="1.8" rx="0.9" fill="#444"/><rect x="704.8" y="234.6" width="9.6" height="6.8" rx="0.6" fill="url(#gr)" stroke="#d4d4d4" stroke-width="0.7"/><path d="M704.4 254.4 Q704.4 250 709.6 250 Q714.8 250 714.6 253.4 Q714.4 255.4 712 255 Q710.6 255 711 256.4 Q711.2 257.9 708.8 257.7 Q704.4 257.5 704.4 254.4Z" fill="#dcdcdc"/><circle cx="707" cy="253" r="0.8" fill="#535353"/><circle cx="709.6" cy="251.8" r="0.8" fill="#535353"/><circle cx="712.2" cy="252.8" r="0.8" fill="#535353"/><circle cx="707.4" cy="255.6" r="0.8" fill="#535353"/><circle cx="707.8" cy="268" r="3.3" fill="#b8b8b8"/><circle cx="710.7" cy="271.2" r="3.1" fill="#767676" stroke="#c4c4c4" stroke-width="0.7"/><rect x="705" y="282.4" width="9" height="6" fill="#8a8a8a" stroke="#d8d8d8" stroke-width="0.7"/><path d="M705 285.4 H714 M708 282.4 V288.4 M711 282.4 V288.4" stroke="#d8d8d8" stroke-width="0.6"/><rect x="705.6" y="283" width="2" height="2" fill="#4a4a4a"/><rect x="711.4" y="283" width="2" height="2" fill="#4a4a4a"/><path d="M705.2 297.3 V305.2 H714.4 Q714 298 705.2 297.3Z" fill="url(#gr2)" stroke="#e0e0e0" stroke-width="0.6"/><rect x="699" y="310.4" width="21" height="0.8" fill="#3a3a3a"/><rect x="703.5" y="313.1" width="11.4" height="1.8" rx="0.9" fill="#444"/><rect x="703.2" y="318" width="13" height="11" fill="none" stroke="#666" stroke-width="0.5"/><path d="M705.2 319.7 H708.2 L709 320.8 H714.4 V327.4 H705.2 Z" fill="#727272" stroke="#d6d6d6" stroke-width="0.7"/><path d="M706.3 326.6 V324.4 L706.8 322.8 H707.6 L708.1 324.4 V326.6 Z" fill="#d6d6d6"/><path d="M709.7 326.6 V324.4 L710.2 322.8 H711.0 L711.5 324.4 V326.6 Z" fill="#d6d6d6"/><path d="M707.6 336.3 H714.8 V343.2 H709.8" fill="none" stroke="#dcdcdc" stroke-width="0.7"/><path d="M707.6 336.3 V340" fill="none" stroke="#dcdcdc" stroke-width="0.7"/><circle cx="707.3" cy="342.2" r="2" fill="#535353" stroke="#dcdcdc" stroke-width="0.7"/><path d="M706 340.9 L708.6 343.5" stroke="#dcdcdc" stroke-width="0.5"/></svg>
<div id="pshadow"></div><div style="left:352px;top:46px;width:1px;height:380px;background:#8c8c8c"></div><div id="phead"></div><div id="ptab"></div>
<div style="left:358.4px;top:50.2px;font-size:6.05px;font-weight:bold;color:#f2f2f2">Datylon Editor</div>
<div style="left:409.8px;top:50.2px;font-size:6.05px;font-weight:bold;color:#9b9b9b">Datylon Account</div>
<svg style="left:687.5px;top:50px" width="8" height="6" viewBox="0 0 8 6"><path d="M1.4 1 L3.4 3 L1.4 5 M4.4 1 L6.4 3 L4.4 5" fill="none" stroke="#b8b8b8" stroke-width="0.7"/></svg>
<div id="pbody"></div><div id="split"></div>
<svg style="left:500px;top:230px" width="7" height="26" viewBox="0 0 7 26"><path d="M4 3.6 L2.4 5.4 L4 7.2 M2.6 18.4 L4.2 20.2 L2.6 22" fill="none" stroke="#222" stroke-width="0.9"/></svg>
<div style="left:364.8px;top:70.9px;font-size:6.5px;font-weight:bold;color:#111">Sheet1</div>
<div class="btn" style="left:442.4px;width:49.2px">Manage data</div>
<div style="left:353.6px;top:86.2px;width:146.4px;height:14.5px;background:#f3f3f3;border-top:0.5px solid #e2e2e2;border-bottom:0.5px solid #e0e0e0"></div>
<div class="hdrcell" style="left:354.2px;width:28.1px"></div>
<div class="hdrcell" style="left:382.3px;width:28px">A</div>
<div class="hdrcell" style="left:410.3px;width:28px">B</div>
<div class="hdrcell" style="left:438.3px;width:28px">C</div>
<div class="hdrcell" style="left:466.3px;width:28px">D</div>
<div class="hdrcell" style="left:494.3px;width:5.7px;border-right:0"></div>
<div class="row" style="top:100.7px;height:59.7px;background:#edf3fe;"><b>1</b><p style="left:28.1px"><span>Continent</span></p><p style="left:56.1px"><span>Country</span></p><p style="left:84.1px"><span>CO2</span><span>emissions</span><span>per</span><span>capita</span><span>(tons)</span></p><p style="left:112.1px"></p></div>
<div class="row" style="top:160.4px;height:12.7px;"><b>2</b><p style="left:28.1px"><span>Asia</span></p><p style="left:56.1px"><span>Qatar</span></p><p style="left:84.1px"><span>37.29</span></p><p style="left:112.1px"></p></div>
<div class="row" style="top:173.1px;height:12.7px;"><b>3</b><p style="left:28.1px"><span>Europe</span></p><p style="left:56.1px"><span>Montenegro</span></p><p style="left:84.1px"><span>25.9</span></p><p style="left:112.1px"></p></div>
<div class="row" style="top:185.8px;height:12.9px;"><b>4</b><p style="left:28.1px"><span>Asia</span></p><p style="left:56.1px"><span>Kuwait</span></p><p style="left:84.1px"><span>25.65</span></p><p style="left:112.1px"></p></div>
<div class="row" style="top:198.7px;height:35.9px;"><b>5</b><p style="left:28.1px"><span>North</span><span>America</span></p><p style="left:56.1px"><span>Trinidad</span><span>and</span><span>Tobago</span></p><p style="left:84.1px"><span>25.39</span></p><p style="left:112.1px"></p></div>
<div class="row" style="top:234.6px;height:36.2px;"><b>6</b><p style="left:28.1px"><span>Asia</span></p><p style="left:56.1px"><span>United</span><span>Arab</span><span>Emirates</span></p><p style="left:84.1px"><span>23.37</span></p><p style="left:112.1px"></p></div>
<div class="row" style="top:270.8px;height:12.6px;"><b>7</b><p style="left:28.1px"><span>Asia</span></p><p style="left:56.1px"><span>Oman</span></p><p style="left:84.1px"><span>19.61</span></p><p style="left:112.1px"></p></div>
<div class="row" style="top:283.4px;height:25.0px;"><b>8</b><p style="left:28.1px"><span>North</span><span>America</span></p><p style="left:56.1px"><span>Canada</span></p><p style="left:84.1px"><span>18.58</span></p><p style="left:112.1px"></p></div>
<div class="row" style="top:308.4px;height:12.3px;"><b>9</b><p style="left:28.1px"><span>Asia</span></p><p style="left:56.1px"><span>Turkmenistan</span></p><p style="left:84.1px"><span>14</span></p><p style="left:112.1px"></p></div>
<div class="row" style="top:320.7px;height:12.9px;"><b>10</b><p style="left:28.1px"><span>Europe</span></p><p style="left:56.1px"><span>Luxembourg</span></p><p style="left:84.1px"><span>17.51</span></p><p style="left:112.1px"></p></div>
<div class="row" style="top:333.6px;height:12.8px;"><b>11</b><p style="left:28.1px"><span>Asia</span></p><p style="left:56.1px"><span>Bahrain</span></p><p style="left:84.1px"><span>17.15</span></p><p style="left:112.1px"></p></div>
<div class="row" style="top:346.4px;height:12.9px;"><b>12</b><p style="left:28.1px"><span>Oceania</span></p><p style="left:56.1px"><span>Australia</span></p><p style="left:84.1px"><span>17.1</span></p><p style="left:112.1px"></p></div>
<div class="row" style="top:359.3px;height:12.9px;"><b>13</b><p style="left:28.1px"><span>Europe</span></p><p style="left:56.1px"><span>Estonia</span></p><p style="left:84.1px"><span>17.02</span></p><p style="left:112.1px"></p></div>
<div class="row" style="top:372.2px;height:12.9px;"><b>14</b><p style="left:28.1px"><span>Europe</span></p><p style="left:56.1px"><span>Gibraltar</span></p><p style="left:84.1px"><span>16.98</span></p><p style="left:112.1px"></p></div>
<div class="row" style="top:385.1px;height:24.6px;"><b>15</b><p style="left:28.1px"><span>South</span><span>America</span></p><p style="left:56.1px"><span>Falkland</span><span>Islands</span></p><p style="left:84.1px"><span>16.59</span></p><p style="left:112.1px"></p></div>
<div class="row" style="top:409.7px;height:16.5px;"><b>16</b><p style="left:28.1px"><span>Asia</span></p><p style="left:56.1px"><span>Saudi</span><span>Arabia</span></p><p style="left:84.1px"><span>15.94</span></p><p style="left:112.1px"></p></div>
<svg style="left:515px;top:69px" width="8" height="10" viewBox="0 0 8 10"><rect x="0.4" y="0.8" width="1.4" height="8" fill="#1a6ff0"/><rect x="2.4" y="0.8" width="2.8" height="5.4" fill="#1a6ff0"/><rect x="2.4" y="6.8" width="2.8" height="2" fill="#9ab8f8"/><rect x="5.8" y="0.8" width="1.4" height="3.6" fill="#1a6ff0"/><rect x="5.4" y="6.6" width="1.8" height="2.2" fill="#1a6ff0"/></svg>
<div style="left:528.3px;top:71px;font-size:6.4px;font-weight:bold;color:#111">Element_1</div>
<div class="btn" style="left:615px;width:45px">Select chart</div>
<div class="btn" style="left:665px;width:23.5px">Help</div>
<div style="left:507px;top:86.6px;width:190px;height:0.5px;background:#e2e2e2"></div>
<div style="left:507px;top:87px;width:63.2px;height:19.6px;background:#f0f5fe;border-bottom:1.6px solid #6596f2"></div>
<div style="left:507px;top:94.3px;width:63.2px;text-align:center;font-size:6.25px;font-weight:bold;color:#1b62e6">Binding</div>
<div style="left:570.2px;top:94.3px;width:63.4px;text-align:center;font-size:6.5px;color:#111">Formatting</div>
<div style="left:633.6px;top:94.3px;width:63.4px;text-align:center;font-size:6.5px;color:#111">Styling</div>
<div class="sec" style="top:106.6px;height:16.8px;line-height:15.4px">DATASET</div>
<div class="lab" style="top:132.8px">First row are headings</div>
<div style="left:680.8px;top:133.2px;width:7px;height:7px;border-radius:2.2px;background:#1868f4"></div><svg style="left:680.8px;top:133.2px" width="7" height="7" viewBox="0 0 7 7"><path d="M1.6 3.6 L2.9 4.9 L5.4 2.2" fill="none" stroke="#fff" stroke-width="0.9"/></svg>
<div class="lab" style="top:150.6px">Data is in</div>
<div class="btn" style="left:602.4px;top:148.3px;width:37.4px;height:11.2px;line-height:10.4px;border:0.6px solid #b4b4b4;border-radius:2.5px;background:#ececec">Rows</div>
<div class="btn" style="left:642.5px;top:148.3px;width:48.2px;height:11.2px;line-height:11.2px;border-radius:2.5px">Columns</div>
<div class="sec" style="top:166.3px;height:16.5px;line-height:16.8px">SERIES</div>
<div style="left:507px;top:182.8px;width:190px;height:18.6px;background:#f8f8f8;border-bottom:0.5px solid #ececec"></div>
<div class="lab" style="top:188.8px">New series 1</div>
<svg style="left:683.6px;top:190px" width="5" height="4" viewBox="0 0 5 4"><path d="M0.4 3.4 L2.5 0.6 L4.6 3.4Z" fill="#111"/></svg>
<div class="lab" style="top:209.5px">Name</div>
<div class="inp" style="top:206.4px">New series 1</div>
<div class="lab" style="top:225.3px">Level 1</div>
<div class="inp ph" style="top:222.2px">Select column...<u></u></div>
<div class="lab" style="top:241.0px">Level 2</div>
<div class="inp" style="top:237.9px">Continent<u></u></div>
<div class="lab" style="top:256.7px">Level 3</div>
<div class="inp" style="top:253.6px">Country<u></u></div>
<div class="lab" style="top:272.5px">Size</div>
<div class="inp" style="top:269.4px">CO2 emissions per capita (tons)<u></u></div>
<div class="lab" style="top:288.2px">Color</div>
<div class="inp" style="top:285.1px">column D<u></u></div>
<div class="lab" style="top:303.9px">Data Label</div>
<div class="inp ph" style="top:300.8px">Select column...<u></u></div>
<div style="left:507px;top:316px;width:190px;height:0.5px;background:#e6e6e6"></div>
<div style="left:689px;top:418.2px;width:8.5px;height:8px;background:#505050"></div>
<div style="left:352.2px;top:426.2px;width:345.3px;height:2.2px;background:#3a3a3a"></div><div style="left:352.2px;top:431px;width:345.3px;height:0.8px;background:#3a3a3a"></div>
</body></html>
